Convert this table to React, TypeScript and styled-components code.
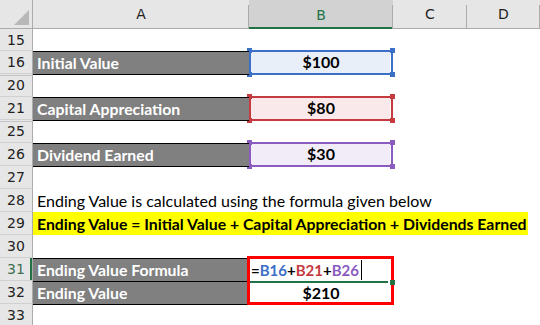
import styled, { createGlobalStyle } from "styled-components";

const GlobalStyle = createGlobalStyle`
  html, body {
    margin: 0;
    padding: 0;
    background: #fff;
  }
  body {
    width: 540px;
    height: 325px;
    overflow: hidden;
  }
`;

const COLS = "33px 216px 144px 74px 73px";

const Sheet = styled.div`
  width: 540px;
  height: 325px;
  overflow: hidden;
  display: flex;
  flex-direction: column;
  font-family: Lato, "Liberation Sans", sans-serif;
  color: #000;
`;

const HeaderRow = styled.div`
  display: grid;
  grid-template-columns: ${COLS};
  height: 28px;
  flex: none;
  background: #e6e6e6;
  border-bottom: 1px solid #ababab;
`;

const Corner = styled.div`
  position: relative;
  border-right: 1px solid #ababab;
  &::after {
    content: "";
    position: absolute;
    right: 3px;
    bottom: 3px;
    width: 15px;
    height: 15px;
    background: #b8b8b8;
    clip-path: polygon(100% 0, 100% 100%, 0 100%);
  }
`;

const ColHead = styled.div<{ $active?: boolean }>`
  position: relative;
  display: flex;
  align-items: center;
  justify-content: center;
  font-family: "DejaVu Sans", sans-serif;
  font-size: 14px;
  color: ${(p) => (p.$active ? "#217346" : "#222")};
  background: ${(p) => (p.$active ? "#d2d2d2" : "transparent")};
  box-shadow: ${(p) => (p.$active ? "inset 0 -2px 0 #217346" : "none")};
  margin-bottom: ${(p) => (p.$active ? "-1px" : "0")};
  &::after {
    content: "";
    position: absolute;
    right: 0;
    top: 5px;
    bottom: 0;
    width: 1px;
    background: #ababab;
  }
`;

const Row = styled.div<{ $h?: number }>`
  display: grid;
  grid-template-columns: ${COLS};
  height: ${(p) => p.$h ?? 23}px;
  flex: none;
`;

const RowNum = styled.div<{ $active?: boolean; $gap?: boolean }>`
  display: flex;
  align-items: center;
  justify-content: center;
  font-family: "DejaVu Sans", sans-serif;
  font-size: 14px;
  color: ${(p) => (p.$active ? "#3f6f50" : "#222")};
  background: #e6e6e6;
  box-sizing: border-box;
  border-bottom: 1px solid #d0d0d0;
  border-right: 1px solid #ababab;
  box-shadow: ${(p) =>
    [
      p.$gap ? "inset 0 1px 0 #e6e6e6, inset 0 2px 0 #c4c4c4" : "",
      p.$active ? "inset -2px 0 0 #217346" : "",
    ]
      .filter(Boolean)
      .join(", ") || "none"};
`;

const Cell = styled.div<{ $align?: "left" | "center"; $bold?: boolean }>`
  position: relative;
  display: flex;
  align-items: flex-end;
  justify-content: ${(p) => (p.$align === "center" ? "center" : "flex-start")};
  padding: 0 4px 3px;
  box-sizing: border-box;
  font-size: 16px;
  line-height: 1;
  font-weight: ${(p) => (p.$bold ? 700 : 400)};
  white-space: nowrap;
  min-width: 0;
`;

const Label = styled(Cell)<{ $last?: boolean }>`
  background: #808080;
  color: #fff;
  font-weight: 700;
  font-size: 15.8px;
  border-top: 1px solid #000;
  box-shadow: ${(p) => (p.$last ? "0 1px 0 #000" : "none")};
  z-index: 1;
`;

const Overflow = styled(Cell)`
  grid-column: 2 / -1;
  overflow: visible;
`;

const Highlight = styled(Cell)`
  grid-column: 2 / -1;
  margin-right: 12px;
  background: #ffff00;
  font-weight: 700;
  font-size: 15.8px;
`;

const FormulaCell = styled(Cell)`
  padding-left: 2px;
  font-weight: 700;
  font-size: 15px;
`;

const RefBox = styled.div<{ $color: string; $fill: string }>`
  position: absolute;
  left: 0;
  right: 0;
  top: -1px;
  bottom: -1px;
  border: 2px solid ${(p) => p.$color};
  background: ${(p) => p.$fill};
  box-shadow: inset -1px 0 0 #fff;
  display: flex;
  align-items: flex-end;
  justify-content: center;
  padding-bottom: 3px;
  box-sizing: border-box;
  color: #000;
  font-weight: 700;
  font-size: 16px;
`;

const Handle = styled.span<{ $color: string; $x: "l" | "r"; $y: "t" | "b" }>`
  position: absolute;
  width: 5px;
  height: 5px;
  background: ${(p) => p.$color};
  ${(p) => (p.$x === "l" ? "left: -4px;" : "right: -4px;")}
  ${(p) => (p.$y === "t" ? "top: -4px;" : "bottom: -4px;")}
`;

const SelectBox = styled.div`
  position: absolute;
  top: -2px;
  left: -2px;
  right: -1px;
  height: 49px;
  border: 3px solid #ff0000;
  box-sizing: border-box;
  pointer-events: none;
  z-index: 2;
`;

const ActiveLine = styled.div`
  position: absolute;
  left: 1px;
  right: 5px;
  bottom: -2px;
  height: 2px;
  background: #217346;
  z-index: 1;
`;

const FillHandle = styled.div`
  position: absolute;
  right: -2px;
  bottom: -4px;
  width: 5px;
  height: 5px;
  background: #217346;
  z-index: 3;
`;

const Ref = styled.span<{ $color: string }>`
  color: ${(p) => p.$color};
`;

const Caret = styled.span`
  display: inline-block;
  width: 1px;
  height: 20px;
  background: #000;
  margin-left: 2px;
  margin-bottom: -2px;
`;

const BLUE = "#3c6fc6";
const RED = "#c53b40";
const PURPLE = "#8a5cc0";

type RefProps = { value: string; color: string; fill: string };

const RefCell = ({ value, color, fill }: RefProps) => (
  <Cell>
    <RefBox $color={color} $fill={fill}>
      {value}
      <Handle $color={color} $x="l" $y="t" />
      <Handle $color={color} $x="l" $y="b" />
      <Handle $color={color} $x="r" $y="t" />
      <Handle $color={color} $x="r" $y="b" />
    </RefBox>
  </Cell>
);

const Blank = ({ n, gap, h }: { n: number; gap?: boolean; h?: number }) => (
  <Row $h={h}>
    <RowNum $gap={gap}>{n}</RowNum>
  </Row>
);

export default function App() {
  return (
    <Sheet>
      <GlobalStyle />
      <HeaderRow>
        <Corner />
        <ColHead>A</ColHead>
        <ColHead $active>B</ColHead>
        <ColHead>C</ColHead>
        <ColHead>D</ColHead>
      </HeaderRow>

      <Blank n={15} h={22} />
      <Row>
        <RowNum>16</RowNum>
        <Label $last>Initial Value</Label>
        <RefCell value="$100" color={BLUE} fill="#e9eff9" />
      </Row>
      <Blank n={20} gap />
      <Row>
        <RowNum>21</RowNum>
        <Label $last>Capital Appreciation</Label>
        <RefCell value="$80" color={RED} fill="#f9e9ea" />
      </Row>
      <Blank n={25} gap />
      <Row>
        <RowNum>26</RowNum>
        <Label $last>Dividend Earned</Label>
        <RefCell value="$30" color={PURPLE} fill="#f1ecf7" />
      </Row>
      <Blank n={27} />
      <Row>
        <RowNum>28</RowNum>
        <Overflow>Ending Value is calculated using the formula given below</Overflow>
      </Row>
      <Row>
        <RowNum>29</RowNum>
        <Highlight>
          Ending Value = Initial Value + Capital Appreciation + Dividends Earned
        </Highlight>
      </Row>
      <Blank n={30} />
      <Row>
        <RowNum $active>31</RowNum>
        <Label>Ending Value Formula</Label>
        <FormulaCell>
          =<Ref $color={BLUE}>B16</Ref>+<Ref $color={RED}>B21</Ref>+
          <Ref $color={PURPLE}>B26</Ref>
          <Caret />
          <SelectBox />
          <ActiveLine />
          <FillHandle />
        </FormulaCell>
      </Row>
      <Row>
        <RowNum>32</RowNum>
        <Label $last>Ending Value</Label>
        <Cell $bold $align="center">
          $210
        </Cell>
      </Row>
      <Blank n={33} />
    </Sheet>
  );
}
